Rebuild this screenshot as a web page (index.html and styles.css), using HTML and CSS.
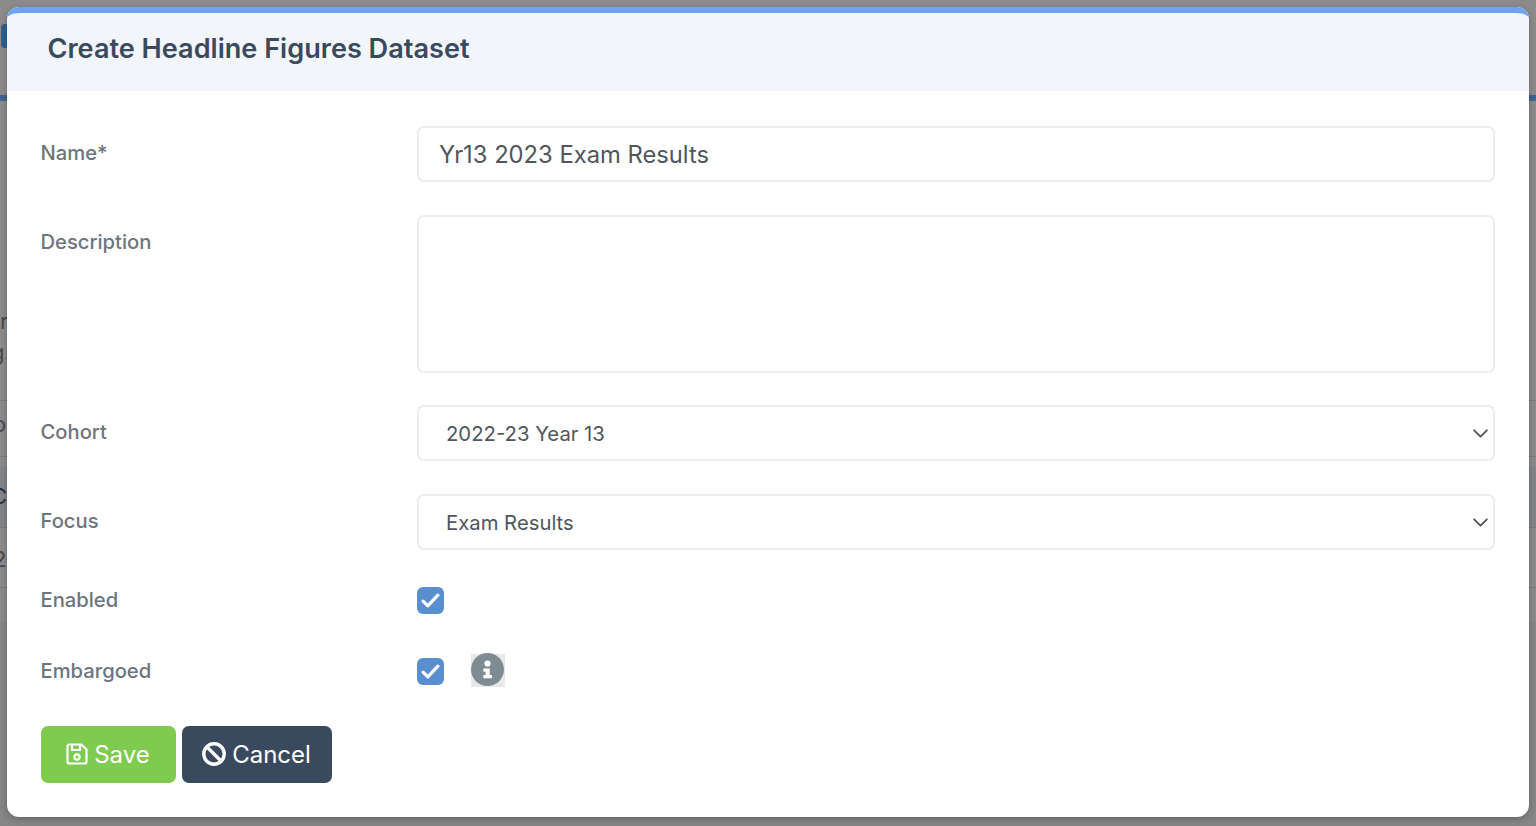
FILE: index.html
```html
<!DOCTYPE html>
<html lang="en">
<head>
    <meta charset="UTF-8">
    <meta name="viewport" content="width=device-width, initial-scale=1.0">
    <title>Create Headline Figures Dataset</title>
    <link rel="stylesheet" href="styles.css">
</head>
<body>
    <!-- page behind the modal, only its edges show -->
    <div class="backdrop">
        <div class="back-tab"></div>
        <div class="back-bar"></div>
        <div class="back-band"></div>
        <div class="back-line back-line-1"></div>
        <div class="back-line back-line-2"></div>
        <div class="back-line back-line-3"></div>
        <div class="back-line back-line-4"></div>
        <div class="back-line back-line-5"></div>
        <div class="back-foot"></div>
        <span class="back-text back-text-1">r</span>
        <span class="back-text back-text-2">g.</span>
        <span class="back-text back-text-3">o</span>
        <span class="back-text back-text-4">C</span>
        <span class="back-text back-text-5">2</span>
    </div>

    <div class="modal">
        <div class="modal-header">
            <h2>Create Headline Figures Dataset</h2>
        </div>
        <form class="modal-body">
            <div class="form-row">
                <label>Name*</label>
                <input class="form-control" type="text" value="Yr13 2023 Exam Results">
            </div>
            <div class="form-row textarea-row">
                <label>Description</label>
                <textarea class="form-control form-textarea"></textarea>
            </div>
            <div class="form-row">
                <label>Cohort</label>
                <div class="form-control form-select">
                    <span>2022-23 Year 13</span>
                    <svg class="chevron" viewBox="0 0 16 16"><path d="M2 5l6 6 6-6" fill="none" stroke="#4e5359" stroke-width="1.7" stroke-linecap="round" stroke-linejoin="round"/></svg>
                </div>
            </div>
            <div class="form-row">
                <label>Focus</label>
                <div class="form-control form-select">
                    <span>Exam Results</span>
                    <svg class="chevron" viewBox="0 0 16 16"><path d="M2 5l6 6 6-6" fill="none" stroke="#4e5359" stroke-width="1.7" stroke-linecap="round" stroke-linejoin="round"/></svg>
                </div>
            </div>
            <div class="form-row check-row">
                <label>Enabled</label>
                <span class="checkbox">
                    <svg viewBox="0 0 20 20"><path d="M4.5 10.5l3.5 3.5 7.5-8" fill="none" stroke="#fff" stroke-width="2.4" stroke-linecap="round" stroke-linejoin="round"/></svg>
                </span>
            </div>
            <div class="form-row check-row embargo-row">
                <label>Embargoed</label>
                <span class="checkbox">
                    <svg viewBox="0 0 20 20"><path d="M4.5 10.5l3.5 3.5 7.5-8" fill="none" stroke="#fff" stroke-width="2.4" stroke-linecap="round" stroke-linejoin="round"/></svg>
                </span>
                <span class="info-box">
                    <svg viewBox="0 0 32 32">
                        <circle cx="16" cy="16" r="16" fill="#7f8b92"/>
                        <circle cx="16" cy="10.2" r="3" fill="#fff"/>
                        <path d="M12 15h6.2v6.4h2.1v3.2h-8.3v-3.2h2.1v-3.2h-2.1z" fill="#fff"/>
                    </svg>
                </span>
            </div>
            <div class="form-actions">
                <button class="btn btn-save" type="button">
                    <svg viewBox="0 0 22 22"><path d="M3.5 1.5h12l5 5v12a2 2 0 0 1-2 2h-15a2 2 0 0 1-2-2v-15a2 2 0 0 1 2-2z" fill="none" stroke="#fff" stroke-width="2.2"/><path d="M6 2v5h8V2" fill="none" stroke="#fff" stroke-width="2.2"/><circle cx="11" cy="14" r="2.6" fill="none" stroke="#fff" stroke-width="2.2"/></svg>
                    Save
                </button>
                <button class="btn btn-cancel" type="button">
                    <svg viewBox="0 0 24 24"><circle cx="12" cy="12" r="10.2" fill="none" stroke="#fff" stroke-width="3.4"/><path d="M5 5l14 14" stroke="#fff" stroke-width="3.4"/></svg>
                    Cancel
                </button>
            </div>
        </form>
    </div>
</body>
</html>
```

FILE: styles.css
```css
:root {
    --label: #6c757d;
    --input-text: #50565c;
    --border: #ecedef;
    --blue: #5a8fcf;
    --navy: #3a4a5e;
}

* {
    margin: 0;
    padding: 0;
    box-sizing: border-box;
}

body {
    width: 1536px;
    height: 826px;
    overflow: hidden;
    background-color: #8b8b8b;
    font-family: Inter, "Liberation Sans", sans-serif;
    padding: 7px;
}

.backdrop {
    position: absolute;
    top: 0;
    left: 0;
    width: 1536px;
    height: 826px;
}

.back-tab {
    position: absolute;
    top: 24px;
    left: 1px;
    width: 12px;
    height: 24px;
    border-radius: 4px;
    background-color: #2f5f92;
}

.back-bar {
    position: absolute;
    top: 95px;
    left: 0;
    width: 100%;
    height: 6px;
    background-color: #3f6494;
}

.back-band {
    position: absolute;
    top: 467px;
    left: 0;
    width: 100%;
    height: 60px;
    background-color: #838488;
}

.back-line {
    position: absolute;
    left: 0;
    width: 100%;
    height: 1px;
    background-color: #7b7b7b;
}

.back-line-1 { top: 400px; }
.back-line-2 { top: 456px; }
.back-line-3 { top: 527px; }
.back-line-4 { top: 587px; }
.back-line-5 { top: 622px; }

.back-foot {
    position: absolute;
    top: 622px;
    left: 0;
    width: 100%;
    height: 204px;
    background-color: #858585;
}

.back-text {
    position: absolute;
    font-size: 22px;
    line-height: 24px;
    color: #45494e;
}

.back-text-1 { left: 0; top: 309px; }
.back-text-2 { left: -9px; top: 340px; }
.back-text-3 { left: -7px; top: 412px; }
.back-text-4 { left: -9px; top: 484px; color: #24324a; }
.back-text-5 { left: -7px; top: 547px; }

.modal {
    position: relative;
    width: 1522px;
    height: 810px;
    background-color: white;
    border-radius: 12px;
    overflow: hidden;
    box-shadow: 0 2px 6px rgba(0,0,0,0.25);
}

.modal-header {
    height: 84px;
    background-color: #f2f5fa;
    border-top: 6px solid #6da2f4;
    border-radius: 12px 12px 0 0;
    padding: 0 40.5px;
    display: flex;
    align-items: center;
}

.modal-header h2 {
    font-size: 27.1px;
    font-weight: 600;
    color: #3a4a5e;
    margin-top: -7px;
}

.modal-body {
    padding: 35px 34px 0 33.5px;
    display: flex;
    flex-direction: column;
}

.form-row {
    display: flex;
    align-items: flex-start;
    margin-bottom: 33px;
}

.textarea-row {
    margin-bottom: 32px;
}

.form-row label {
    width: 376.5px;
    flex-shrink: 0;
    font-size: 20.2px;
    font-weight: 500;
    line-height: 24px;
    padding-top: 15px;
    color: var(--label);
}

.form-control {
    width: 1078px;
    height: 56px;
    border: 2px solid var(--border);
    border-radius: 7px;
    background-color: white;
    font-family: inherit;
    font-size: 23.75px;
    color: var(--input-text);
    padding: 0 20px;
    outline: none;
    display: block;
}

.form-textarea {
    height: 158px;
    resize: none;
}

.form-select {
    display: flex;
    align-items: center;
    justify-content: space-between;
    font-size: 20.3px;
    padding: 0 4px 0 27px;
}

.chevron {
    width: 17px;
    height: 17px;
}

.check-row {
    align-items: center;
    margin-top: 4px;
    margin-bottom: 0;
    height: 27px;
}

.check-row label {
    padding-bottom: 2px;
    padding-top: 0;
}

.embargo-row {
    margin-top: 44px;
}

.checkbox {
    width: 27px;
    height: 27px;
    border-radius: 6px;
    background-color: var(--blue);
    display: flex;
    align-items: center;
    justify-content: center;
}

.checkbox svg {
    width: 27px;
    height: 27px;
}

.info-box {
    width: 34px;
    height: 33px;
    margin-left: 27px;
    margin-top: -3px;
    background-color: #e8e8e8;
    display: block;
    line-height: 0;
}

.info-box svg {
    width: 33px;
    height: 33px;
    margin-top: -1px;
}

.form-actions {
    display: flex;
    gap: 6px;
    margin-top: 41px;
}

.btn {
    height: 57px;
    border: none;
    border-radius: 7px;
    font-family: inherit;
    font-size: 24px;
    color: white;
    padding-bottom: 1px;
    display: flex;
    align-items: center;
    justify-content: center;
    gap: 6px;
}

.btn svg {
    width: 22px;
    height: 22px;
}

.btn-save {
    width: 135px;
    background-color: #7fcb4f;
}

.btn-cancel {
    width: 150px;
    background-color: var(--navy);
}

.btn-cancel svg {
    width: 24px;
    height: 24px;
}
```
